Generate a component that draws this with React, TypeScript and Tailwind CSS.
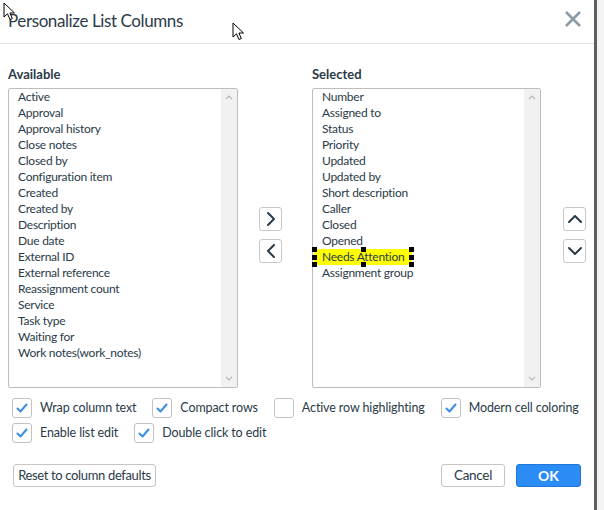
import React from "react";

const available = [
  "Active",
  "Approval",
  "Approval history",
  "Close notes",
  "Closed by",
  "Configuration item",
  "Created",
  "Created by",
  "Description",
  "Due date",
  "External ID",
  "External reference",
  "Reassignment count",
  "Service",
  "Task type",
  "Waiting for",
  "Work notes(work_notes)",
];

const selected = [
  "Number",
  "Assigned to",
  "Status",
  "Priority",
  "Updated",
  "Updated by",
  "Short description",
  "Caller",
  "Closed",
  "Opened",
  "Needs Attention",
  "Assignment group",
];

const FONT = { fontFamily: "Lato, 'Noto Sans', sans-serif" };

function Chevron({ dir }: { dir: "up" | "down" | "left" | "right" }) {
  const paths: Record<string, string> = {
    right: "M5 2 L11 8 L5 14",
    left: "M11 2 L5 8 L11 14",
    up: "M2 11 L8 5 L14 11",
    down: "M2 5 L8 11 L14 5",
  };
  return (
    <svg width="16" height="16" viewBox="0 0 16 16" fill="none">
      <path d={paths[dir]} stroke="#2a3a48" strokeWidth="2" strokeLinecap="round" strokeLinejoin="round" />
    </svg>
  );
}

function IconButton({ dir }: { dir: "up" | "down" | "left" | "right" }) {
  return (
    <button className="w-[23px] h-[24px] rounded-[3px] border border-[#c9c9c9] bg-white flex items-center justify-center">
      <Chevron dir={dir} />
    </button>
  );
}

function Scrollbar() {
  return (
    <div className="w-[16px] bg-[#f1f1f1] flex flex-col justify-between items-center py-[5px]">
      <svg width="8" height="6" viewBox="0 0 8 6" fill="none">
        <path d="M1 5 L4 2 L7 5" stroke="#b8b8b8" strokeWidth="1.2" />
      </svg>
      <svg width="8" height="6" viewBox="0 0 8 6" fill="none">
        <path d="M1 1 L4 4 L7 1" stroke="#b8b8b8" strokeWidth="1.2" />
      </svg>
    </div>
  );
}

function Handle({ className }: { className: string }) {
  return <span className={`absolute w-[5px] h-[5px] bg-black ${className}`} />;
}

function ListBox({ items, highlight }: { items: string[]; highlight?: string }) {
  return (
    <div className="h-[300px] border border-[#bdbdbd] rounded-[2px] flex bg-white">
      <div className="flex-1 pl-[1px] text-[12px] tracking-[-0.25px]">
        {items.map((it) =>
          it === highlight ? (
            <div key={it} className="h-[16px] flex">
              <span className="relative bg-[#ffff00] pl-[8px] pr-[8px] h-[16px] leading-[16px]">
                {it}
                <Handle className="-left-[2px] -top-[2px]" />
                <Handle className="left-1/2 -ml-[2px] -top-[2px]" />
                <Handle className="-right-[2px] -top-[2px]" />
                <Handle className="-left-[2px] top-1/2 -mt-[2px]" />
                <Handle className="-right-[2px] top-1/2 -mt-[2px]" />
                <Handle className="-left-[2px] -bottom-[2px]" />
                <Handle className="left-1/2 -ml-[2px] -bottom-[2px]" />
                <Handle className="-right-[2px] -bottom-[2px]" />
              </span>
            </div>
          ) : (
            <div key={it} className="h-[16px] leading-[16px] pl-[8px] whitespace-nowrap">
              {it}
            </div>
          )
        )}
      </div>
      <Scrollbar />
    </div>
  );
}

function Check({ checked, label }: { checked: boolean; label: string }) {
  return (
    <div className="flex items-center mr-[16px]">
      <div className="w-[20px] h-[20px] rounded-[3px] border border-[#c2c2c2] bg-white flex items-center justify-center">
        {checked && (
          <svg width="12" height="10" viewBox="0 0 12 10" fill="none">
            <path d="M1.5 5.5 L4.5 8.5 L10.5 1.5" stroke="#3a8ee6" strokeWidth="2" strokeLinecap="round" strokeLinejoin="round" />
          </svg>
        )}
      </div>
      <span className="ml-[8px] text-[12.5px] tracking-[-0.12px] text-[#2a3a48] whitespace-nowrap">{label}</span>
    </div>
  );
}

function Cursor({ className }: { className: string }) {
  return (
    <svg className={`absolute ${className}`} width="13" height="19" viewBox="0 0 13 19">
      <path d="M1 1 L1 15 L4.5 11.8 L7 17.5 L9.3 16.5 L6.9 11 L11.5 11 Z" fill="white" stroke="black" strokeWidth="1" strokeLinejoin="round" />
    </svg>
  );
}

export default function App() {
  return (
    <div className="relative w-[604px] h-[510px] overflow-hidden flex bg-white text-[#2a3a48]" style={FONT}>
      {/* dialog */}
      <div className="w-[594px] h-full bg-white flex flex-col">
        <div className="h-[44px] border-b border-[#e2e2e2] flex items-center justify-between pl-[8px] pr-[12px]">
          <h1 className="text-[17px] tracking-[-0.4px] text-[#2c3b48] -mt-[2px]">Personalize List Columns</h1>
          <svg width="18" height="18" viewBox="0 0 18 18" className="-mt-[5px]">
            <path d="M2 2 L16 16 M16 2 L2 16" stroke="#8c9aa6" strokeWidth="2.6" />
          </svg>
        </div>

        <div className="pl-[8px] pt-[21px] flex text-[#2a3a48]">
          <div className="w-[230px]">
            <div className="text-[13px] font-bold h-[18px] leading-[18px] mb-[5px]">Available</div>
            <ListBox items={available} />
          </div>
          <div className="w-[74px] pl-[21px] pt-[142px] flex flex-col gap-[8px]">
            <IconButton dir="right" />
            <IconButton dir="left" />
          </div>
          <div className="w-[229px]">
            <div className="text-[13px] font-bold h-[18px] leading-[18px] mb-[5px]">Selected</div>
            <ListBox items={selected} highlight="Needs Attention" />
          </div>
          <div className="pl-[22px] pt-[142px] flex flex-col gap-[8px]">
            <IconButton dir="up" />
            <IconButton dir="down" />
          </div>
        </div>

        <div className="pl-[12px] pt-[10px] flex flex-col gap-[5px]">
          <div className="flex">
            <Check checked label="Wrap column text" />
            <Check checked label="Compact rows" />
            <Check checked={false} label="Active row highlighting" />
            <Check checked label="Modern cell coloring" />
          </div>
          <div className="flex">
            <Check checked label="Enable list edit" />
            <Check checked label="Double click to edit" />
          </div>
        </div>

        <div className="pl-[13px] pr-[13px] pt-[21px] flex items-center justify-between">
          <button className="h-[23px] w-[143px] rounded-[3px] border border-[#c5c5c5] bg-white text-[13px] tracking-[-0.35px] text-[#2a3a48]">
            Reset to column defaults
          </button>
          <div className="flex gap-[11px]">
            <button className="w-[64px] h-[23px] rounded-[3px] border border-[#c5c5c5] bg-white text-[13.5px] tracking-[-0.3px] text-[#2a3a48]">
              Cancel
            </button>
            <button className="w-[65px] h-[23px] rounded-[3px] border border-[#1f78d8] bg-[#2b8cf5] text-[14px] font-bold text-white">
              OK
            </button>
          </div>
        </div>
      </div>

      {/* page behind the dialog */}
      <div className="w-[3px] h-full bg-[#5f5f5f]" />
      <div className="flex-1 h-full bg-[#f4f4f4]" />

      <Cursor className="left-[3px] top-[2px]" />
      <Cursor className="left-[232px] top-[22px]" />
    </div>
  );
}
